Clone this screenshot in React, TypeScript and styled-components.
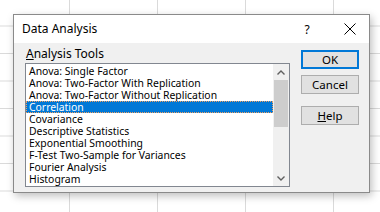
import React from 'react';
import styled, { createGlobalStyle } from 'styled-components';

const tools = [
  'Anova: Single Factor',
  'Anova: Two-Factor With Replication',
  'Anova: Two-Factor Without Replication',
  'Correlation',
  'Covariance',
  'Descriptive Statistics',
  'Exponential Smoothing',
  'F-Test Two-Sample for Variances',
  'Fourier Analysis',
  'Histogram',
];

const GlobalStyle = createGlobalStyle`
  html, body {
    margin: 0;
    height: 100%;
    overflow: hidden;
  }
  body {
    font-family: "Noto Sans", "DejaVu Sans", sans-serif;
    font-size: 12px;
    color: #000;
    background-color: #fff;
    background-image:
      linear-gradient(to right, #dadada 1px, transparent 1px),
      linear-gradient(to bottom, #dadada 1px, transparent 1px);
    background-size: 88px 27.5px;
    background-position: -19px -2px;
  }
`;

const Desk = styled.div`
  padding: 14px 0 0 13px;
`;

const Dialog = styled.div`
  width: 355px;
  height: 177px;
  border: 1px solid #8a8a8a;
  background: #f0f0f0;
  box-shadow: 2px 3px 8px rgba(0, 0, 0, 0.25);
  display: flex;
  flex-direction: column;
`;

const TitleBar = styled.div`
  height: 28px;
  background: #fff;
  display: flex;
  align-items: center;
  padding-left: 8px;
`;

const Title = styled.span`
  flex: 1;
  font-size: 12px;
  padding-bottom: 2px;
`;

const Caption = styled.span<{ $w: number }>`
  width: ${p => p.$w}px;
  display: flex;
  justify-content: center;
  align-items: center;
  height: 100%;
`;

const Body = styled.div`
  flex: 1;
  display: flex;
  padding: 4px 0 0 11px;
`;

const LeftCol = styled.div`
  display: flex;
  flex-direction: column;
`;

const Label = styled.div`
  height: 16px;
  line-height: 14px;
  padding-left: 1px;
  u { text-decoration: underline; text-underline-offset: 1px; }
`;

const ListBox = styled.div`
  width: 263px;
  height: 122px;
  border: 1px solid #828790;
  background: #fff;
  display: flex;
`;

const Items = styled.div`
  flex: 1;
  padding-top: 1px;
  display: flex;
  flex-direction: column;
`;

const Item = styled.div<{ $selected?: boolean }>`
  height: 12px;
  line-height: 12px;
  font-size: 10.4px;
  padding-left: 3px;
  white-space: nowrap;
  background: ${p => (p.$selected ? '#0078d7' : 'transparent')};
  color: ${p => (p.$selected ? '#fff' : '#000')};
  outline: ${p => (p.$selected ? '1px dotted #f0a060' : 'none')};
  outline-offset: -1px;
`;

const ScrollBar = styled.div`
  width: 16px;
  background: #f0f0f0;
  display: flex;
  flex-direction: column;
`;

const Arrow = styled.div`
  height: 16px;
  display: flex;
  align-items: center;
  justify-content: center;
`;

const Thumb = styled.div`
  height: 47px;
  margin: 0 1px;
  background: #cdcdcd;
`;

const Track = styled.div`
  flex: 1;
`;

const Buttons = styled.div`
  display: flex;
  flex-direction: column;
  margin-left: 11px;
  padding-top: 3px;
`;

const Button = styled.div<{ $default?: boolean; $gap?: number }>`
  width: ${p => (p.$default ? 54 : 56)}px;
  height: ${p => (p.$default ? 15 : 17)}px;
  margin-bottom: ${p => p.$gap ?? 6}px;
  border: ${p => (p.$default ? '2px solid #0078d7' : '1px solid #adadad')};
  background: #e1e1e1;
  display: flex;
  align-items: center;
  justify-content: center;
  font-size: 11.5px;
  u { text-decoration: underline; text-underline-offset: 1px; }
`;

const Chevron = ({ up }: { up?: boolean }) => (
  <svg width="8" height="5" viewBox="0 0 8 5">
    <path
      d={up ? 'M0.5 4.5 L4 1 L7.5 4.5' : 'M0.5 0.5 L4 4 L7.5 0.5'}
      fill="none"
      stroke="#606060"
      strokeWidth="1.4"
    />
  </svg>
);

export default function App() {
  return (
    <>
      <GlobalStyle />
      <Desk>
        <Dialog>
          <TitleBar>
            <Title>Data Analysis</Title>
            <Caption $w={46}>?</Caption>
            <Caption $w={39}>
              <svg width="12" height="12" viewBox="0 0 12 12">
                <path d="M0.5 0.5 L11.5 11.5 M11.5 0.5 L0.5 11.5" stroke="#000" strokeWidth="1" />
              </svg>
            </Caption>
          </TitleBar>
          <Body>
            <LeftCol>
              <Label>
                <u>A</u>nalysis Tools
              </Label>
              <ListBox>
                <Items>
                  {tools.map(t => (
                    <Item key={t} $selected={t === 'Correlation'}>
                      {t}
                    </Item>
                  ))}
                </Items>
                <ScrollBar>
                  <Arrow>
                    <Chevron up />
                  </Arrow>
                  <Thumb />
                  <Track />
                  <Arrow>
                    <Chevron />
                  </Arrow>
                </ScrollBar>
              </ListBox>
            </LeftCol>
            <Buttons>
              <Button $default>OK</Button>
              <Button $gap={12}>Cancel</Button>
              <Button>
                <u>H</u>elp
              </Button>
            </Buttons>
          </Body>
        </Dialog>
      </Desk>
    </>
  );
}
